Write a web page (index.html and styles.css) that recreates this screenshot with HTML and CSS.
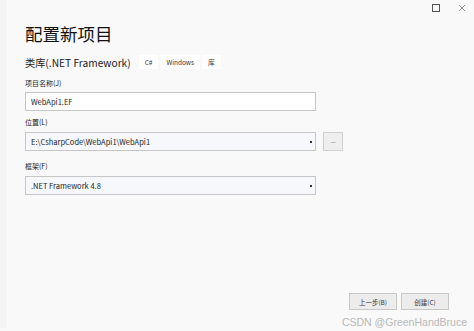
FILE: index.html
```html
<!DOCTYPE html>
<html lang="zh-CN">
<head>
    <meta charset="UTF-8">
    <title>配置新项目</title>
    <link rel="stylesheet" href="styles.css">
</head>
<body>
    <div class="window">
        <div class="titlebar">
            <span class="ctl">
                <svg width="10" height="10" viewBox="0 0 10 10"><rect x="1.5" y="1.5" width="7" height="7" fill="none" stroke="#555" stroke-width="1"/></svg>
            </span>
            <span class="ctl">
                <svg width="10" height="10" viewBox="0 0 10 10"><path d="M2 2 L8 8 M8 2 L2 8" stroke="#888" stroke-width="0.9"/></svg>
            </span>
        </div>

        <div class="content">
            <h1>配置新项目</h1>
            <div class="subtitle">
                <span class="kind">类库(.NET Framework)</span>
                <span class="tag">C#</span>
                <span class="tag">Windows</span>
                <span class="tag">库</span>
            </div>

            <label class="field-label first">项目名称(J)</label>
            <div class="input">WebApi1.EF</div>

            <label class="field-label">位置(L)</label>
            <div class="row">
                <div class="input select">E:\CsharpCode\WebApi1\WebApi1<span class="arrow"></span></div>
                <div class="browse">...</div>
            </div>

            <label class="field-label gap">框架(F)</label>
            <div class="input select">.NET Framework 4.8<span class="arrow"></span></div>
        </div>

        <div class="footer">
            <button class="btn">上一步(B)</button>
            <button class="btn">创建(C)</button>
        </div>
    </div>
    <div class="watermark">CSDN @GreenHandBruce</div>
</body>
</html>
```

FILE: styles.css
```css
html, body {
    margin: 0;
    padding: 0;
}
body {
    width: 474px;
    height: 331px;
    background-color: #f9f9f9;
    font-family: "Noto Sans CJK SC", "Open Sans", sans-serif;
    color: #1e1e1e;
    position: relative;
    overflow: hidden;
}
.window {
    height: 328px;
    display: flex;
    flex-direction: column;
    border-left: 7px solid #f4f4f4;
    box-sizing: border-box;
}
.titlebar {
    display: flex;
    justify-content: flex-end;
    gap: 16px;
    padding: 3px 7px 0 0;
    height: 14px;
}
.ctl {
    width: 10px;
    height: 10px;
    display: flex;
}
.content {
    padding-left: 18px;
    width: 291px;
}
h1 {
    font-size: 17.5px;
    font-weight: normal;
    margin: 4px 0 0 0;
    line-height: 26px;
    color: #111;
}
.subtitle {
    display: flex;
    align-items: center;
    margin-top: 7px;
    height: 16px;
}
.kind {
    font-size: 10.2px;
    margin-right: 8px;
    color: #222;
}
.tag {
    font-size: 6.5px;
    background-color: #fff;
    padding: 2px 6px;
    margin-right: 2px;
    color: #333;
}
.field-label {
    display: block;
    font-size: 7px;
    margin-top: 6px;
    line-height: 10px;
    color: #222;
}
.field-label.first {
    margin-top: 8px;
}
.field-label.gap {
    margin-top: 10px;
}
.input {
    margin-top: 4px;
    height: 19px;
    border: 1px solid #c6c6c6;
    background-color: #fff;
    box-sizing: border-box;
    font-size: 7.5px;
    line-height: 17px;
    padding-left: 5px;
    width: 291px;
    position: relative;
    color: #222;
}
.input.select {
    margin-top: 5px;
    background-color: #f6f8fc;
}
.arrow {
    position: absolute;
    right: 3px;
    top: 8px;
    width: 2px;
    height: 2px;
    background-color: #333;
}
.row {
    display: flex;
    align-items: flex-start;
    gap: 7px;
    width: 318px;
}
.row .input {
    flex: none;
}
.browse {
    margin-top: 5px;
    width: 20px;
    height: 19px;
    box-sizing: border-box;
    border: 1px solid #cfcfcf;
    background-color: #eeeeee;
    font-family: "Liberation Sans", sans-serif;
    font-size: 7px;
    line-height: 15px;
    letter-spacing: -0.5px;
    text-align: center;
    color: #555;
}
.footer {
    margin-top: auto;
    display: flex;
    justify-content: flex-end;
    gap: 4px;
    padding: 0 25px 18px 0;
}
.btn {
    width: 48px;
    height: 17px;
    border: 1px solid #c8c8c8;
    background-color: #ececec;
    font-family: "Noto Sans CJK SC", sans-serif;
    font-size: 6.5px;
    color: #333;
    padding: 0;
}
.watermark {
    position: absolute;
    right: 7px;
    bottom: 3px;
    font-family: "Liberation Sans", Arial, sans-serif;
    font-size: 10.5px;
    color: #b8b8b8;
}
```
